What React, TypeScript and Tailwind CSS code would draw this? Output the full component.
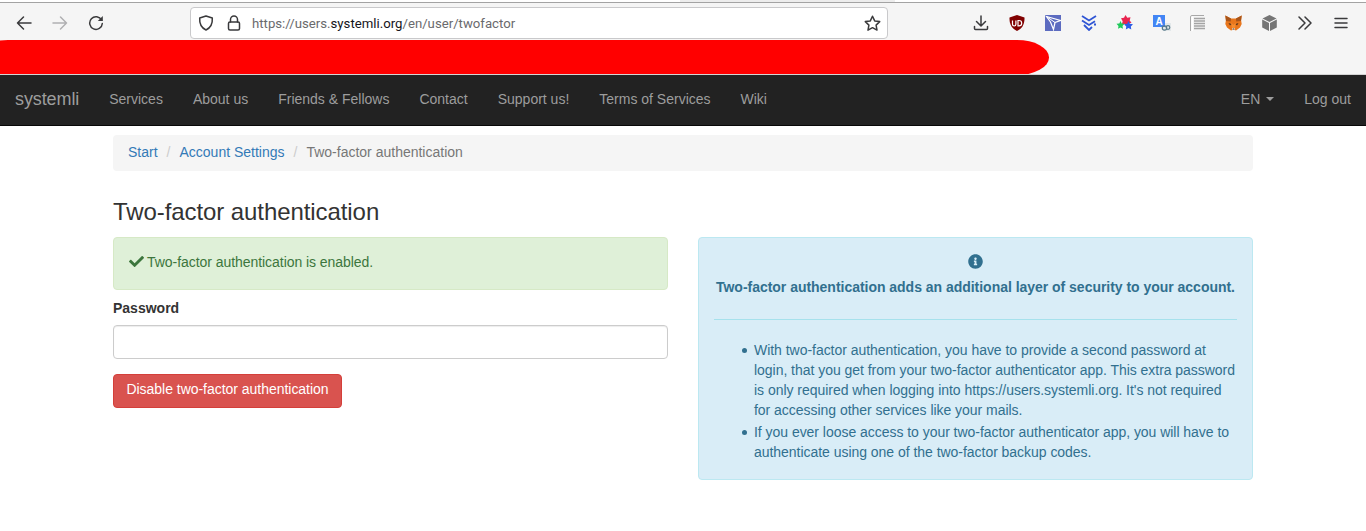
import React from "react";
import { FaCheck, FaInfoCircle } from "react-icons/fa";

const Btn = ({ children }: { children: React.ReactNode }) => (
  <div className="flex h-8 w-9 shrink-0 items-center justify-center">{children}</div>
);

const stroke = { fill: "none", stroke: "#3a3a3c", strokeWidth: 1.5, strokeLinecap: "round" as const, strokeLinejoin: "round" as const };

const Back = () => (
  <svg width="16" height="16" viewBox="0 0 16 16" {...stroke}><path d="M15 8H1.5M7.5 2 1.5 8l6 6" /></svg>
);
const Forward = () => (
  <svg width="16" height="16" viewBox="0 0 16 16" {...stroke} stroke="#b0b0b2"><path d="M1 8h13.5M8.5 2l6 6-6 6" /></svg>
);
const Reload = () => (
  <svg width="16" height="16" viewBox="0 0 16 16" {...stroke}>
    <path d="M13.6 5.2A6.3 6.3 0 1 0 14.3 8.5" />
    <path d="M14.8 1v5h-5z" fill="#3a3a3c" stroke="none" />
  </svg>
);
const Shield = () => (
  <svg width="16" height="16" viewBox="0 0 16 16" {...stroke}><path d="M8 1 14.3 3c.4 5.5-1.5 9.7-6.3 12C3.2 12.7 1.3 8.5 1.7 3z" /></svg>
);
const Lock = () => (
  <svg width="14" height="16" viewBox="0 0 14 16" {...stroke}>
    <path d="M3.5 7V4.500a3.500 3.500 0 0 1 7 0V7" />
    <rect x="1.5" y="7" width="11" height="8" rx="1.5" />
  </svg>
);
const Star = () => (
  <svg width="17" height="17" viewBox="0 0 17 17" {...stroke}>
    <path d="m8.5 1.3 2.200 4.600 5 .7-3.600 3.500.9 5-4.500-2.400L4 15.100l.9-5L1.300 6.600l5-.7z" />
  </svg>
);
const Download = () => (
  <svg width="16" height="16" viewBox="0 0 16 16" {...stroke}>
    <path d="M8 1v9.500M3.500 6.500 8 11l4.500-4.500M1.500 11.500v2a1 1 0 0 0 1 1h11a1 1 0 0 0 1-1v-2" />
  </svg>
);
const UBlock = () => (
  <svg width="16" height="16" viewBox="0 0 16 16">
    <path d="M8 0 15.500 2.500c.3 6.500-2.500 11-7.500 13.500C3 13.500.2 9 .5 2.500z" fill="#800000" />
    <path d="M3.500 5.500v3.800a1.700 1.700 0 0 0 3.400 0V5.500" fill="none" stroke="#fff" strokeWidth="1.200" />
    <path d="M9 5.500v5.400h1a2.700 2.700 0 0 0 0-5.400z" fill="none" stroke="#fff" strokeWidth="1.200" />
  </svg>
);
const Plane = () => (
  <svg width="16" height="16" viewBox="0 0 16 16">
    <rect width="16" height="16" fill="#5c6bc0" />
    <path d="M1.500 1.500 15.500 5.500 10 7.500 8.500 14.500 5.500 7z" fill="none" stroke="#fff" strokeWidth="1.200" />
    <path d="M1.500 1.500 10 7.500" stroke="#fff" strokeWidth="1" />
  </svg>
);
const Chevrons = () => (
  <svg width="16" height="16" viewBox="0 0 16 16" fill="none" stroke="#2f55d4" strokeWidth="1.800">
    <path d="M1 1 8 5.500 15 1M1 5.500 8 10l6-3.800M3 10l5 5 3-3" />
    <rect x="13" y="8.500" width="2" height="2" fill="#2f55d4" stroke="none" />
  </svg>
);
const Stars = () => (
  <svg width="18" height="17" viewBox="0 0 18 17">
    <path d="m9.500 0 1.800 2.800 3.200-.5-.8 3.200 1.800 2.300-3.200.6-1.200 3-2.200-2.500-3 .4.800-3.100L5 3.300l3-.6z" fill="#e8244f" />
    <path d="m4.500 6 1.200 2.400 2.800.4-2 2.100.5 2.900L4.500 12.500 2 13.800l.5-2.900-2-2.100 2.800-.4z" fill="#1fc95a" />
    <path d="m12.500 6 1.400 2.800 3.100.4-2.200 2.200.5 3.100-2.800-1.400-2.700 1.400.5-3.100-2.300-2.200 3.100-.4z" fill="#2b5ce6" />
  </svg>
);
const Translate = () => (
  <svg width="18" height="16" viewBox="0 0 18 16" className="ml-[1px]">
    <rect x="10" y="8" width="8" height="8" fill="#e3e8ea" />
    <rect width="12" height="12" fill="#4285f4" />
    <text x="6" y="10" textAnchor="middle" fontSize="10" fontWeight="700" fill="#fff" className="font-['Liberation_Sans']">A</text>
    <circle cx="11.500" cy="13" r="2.200" fill="none" stroke="#587a8a" strokeWidth="1.200" />
    <circle cx="15" cy="12.500" r="1.800" fill="none" stroke="#587a8a" strokeWidth="1.200" />
  </svg>
);
const Reader = () => (
  <svg width="15" height="16" viewBox="0 0 15 16">
    <path d="M.5 16V2Q.5 .5 2 .5H14" fill="none" stroke="#a8a8a8" strokeWidth="1" />
    <path d="M1.500 1.500h1.500V16H1.500z" fill="#fff" />
    <path d="M4 3.500h11M4 6h11M4 8.500h11M4 11h11M4 13.500h11" stroke="#a4a4a4" strokeWidth="1.400" />
  </svg>
);
const Fox = () => (
  <svg width="17" height="16" viewBox="0 0 17 16">
    <path d="M.3 .5 6 3.500h5L16.700 .5l-.6 5 .6 3.500-1.700 3.500-4 3-1.500-.5H7.500l-1.500.5-4-3L.3 9l.6-3.500z" fill="#e8761c" />
    <path d="M.3 .5 6 3.500 5.800 6.500 1 6zM16.700 .5 11 3.500 11.200 6.500 16 6z" fill="#a9551a" />
    <path d="M6 7.500 8.500 10 11 7.500 10 13H7z" fill="#f58c2f" />
    <path d="M3.500 8 6.500 9 5 10.500zM13.500 8l-3 1 1.500 1.500z" fill="#4a3320" />
    <path d="M7 13h3l-.5 2h-2z" fill="#f3e2cf" />
    <path d="M7.700 13.500h1.600v1h-1.600z" fill="#2f2f2f" />
  </svg>
);
const Cube = () => (
  <svg width="15" height="16" viewBox="0 0 15 16">
    <path d="M7.500 0 14.500 3.500 7.500 7 .5 3.500z" fill="#757575" />
    <path d="M.2 4.600 7 8v8L.2 12.400z" fill="#757575" />
    <path d="M14.800 4.600 8 8v8l6.800-3.600z" fill="#757575" />
  </svg>
);
const More = () => (
  <svg width="14" height="14" viewBox="0 0 14 14" {...stroke}><path d="m1 1 6 6-6 6M7 1l6 6-6 6" /></svg>
);
const Menu = () => (
  <svg width="14" height="14" viewBox="0 0 14 14" {...stroke}><path d="M1 2.500h12M1 7h12M1 11.500h12" /></svg>
);

const navItems = ["Services", "About us", "Friends & Fellows", "Contact", "Support us!", "Terms of Services", "Wiki"];

export default function App() {
  return (
    <div className="h-[531px] w-[1366px] overflow-hidden bg-white font-['Liberation_Sans',Arial,sans-serif] text-sm text-[#333]">
      <div className="h-[3px] border-b border-[#a3a3a3] bg-white">
        <div className="ml-[680px] h-[2px] w-[215px] bg-[#ededed]" />
      </div>
      <div className="flex h-[37px] items-center bg-[#f5f5f5] pl-[6px] pt-[3px]">
        <Btn><Back /></Btn>
        <Btn><Forward /></Btn>
        <Btn><Reload /></Btn>
        <div className="ml-[76px] flex h-[32px] w-[698px] items-center rounded-[4px] border border-[#c9c9cb] bg-white font-['Roboto',sans-serif] text-[13.2px] text-[#6a6a6d]">
          <div className="ml-[7px] flex w-[16px] justify-center"><Shield /></div>
          <div className="ml-[12px] flex w-[16px] justify-center"><Lock /></div>
          <div className="ml-[10px] flex-1 whitespace-nowrap pt-[3px]">
            https://users.<span className="text-[#15141a]">systemli.org</span>/en/user/twofactor
          </div>
          <div className="mr-[6px] flex"><Star /></div>
        </div>
        <div className="ml-[75px] flex">
          <Btn><Download /></Btn>
          <Btn><UBlock /></Btn>
          <Btn><Plane /></Btn>
          <Btn><Chevrons /></Btn>
          <Btn><Stars /></Btn>
          <Btn><Translate /></Btn>
          <Btn><Reader /></Btn>
          <Btn><Fox /></Btn>
          <Btn><Cube /></Btn>
          <Btn><More /></Btn>
          <Btn><Menu /></Btn>
        </div>
      </div>
      <div className="h-[35px] overflow-hidden border-b border-[#d4d4d4] bg-[#f5f5f5]">
        <div className="ml-[-24px] h-[35px] w-[1073px] rounded-[32px/17.5px] bg-[#ff0000]" />
      </div>
      <nav className="flex h-[51px] items-center border-b border-[#080808] bg-[#222] pb-[2px] text-[#9d9d9d]">
        <div className="ml-[15px] mr-[30px] text-lg tracking-[-0.1px]">systemli</div>
        <div className="flex gap-[30px]">
          {navItems.map((n) => (
            <span key={n}>{n}</span>
          ))}
        </div>
        <div className="ml-auto flex items-center">
          <span>EN</span>
          <span className="ml-[6px] h-0 w-0 border-x-4 border-t-4 border-x-transparent border-t-[#9d9d9d]" />
          <span className="ml-[30px] mr-[15px]">Log out</span>
        </div>
      </nav>
      <main className="mx-auto w-[1140px] pt-[9px]">
        <div className="flex h-[36px] items-center rounded-[4px] bg-[#f5f5f5] px-[15px] pb-[2px]">
          <span className="text-[#337ab7]">Start</span>
          <span className="px-[9px] text-[#ccc]">/</span>
          <span className="text-[#337ab7]">Account Settings</span>
          <span className="px-[9px] text-[#ccc]">/</span>
          <span className="text-[#777]">Two-factor authentication</span>
        </div>
        <h1 className="mt-[28px] text-[24px] leading-[26px] tracking-[-0.08px] text-[#333]">Two-factor authentication</h1>
        <div className="mt-[12px] flex justify-between">
          <div className="w-[555px]">
            <div className="flex h-[53px] items-center rounded-[4px] border border-[#d6e9c6] bg-[#dff0d8] px-[15px] pb-[4px] tracking-[-0.05px] text-[#3c763d]">
              <FaCheck className="mr-[3px] text-[15px]" />
              <span>Two-factor authentication is enabled.</span>
            </div>
            <label className="mt-[7px] block h-[28px] pt-[1px] font-bold leading-[20px] text-[#333]">Password</label>
            <input className="block h-[34px] w-full rounded-[4px] border border-[#ccc] bg-white shadow-[inset_0_1px_1px_rgba(0,0,0,0.075)]" />
            <button className="mt-[15px] h-[34px] w-[229px] rounded-[4px] border border-[#d43f3a] bg-[#d9534f] pb-[5px] tracking-[-0.03px] text-white">
              Disable two-factor authentication
            </button>
          </div>
          <div className="h-[243px] w-[555px] rounded-[4px] border border-[#bce8f1] bg-[#d9edf7] px-[15px] pt-[16px] text-[#31708f]">
            <div className="flex h-[16px] justify-center"><FaInfoCircle className="text-[15px]" /></div>
            <p className="mt-[7px] text-center font-bold leading-[20px] tracking-[-0.025px]">
              Two-factor authentication adds an additional layer of security to your account.
            </p>
            <hr className="mb-[20px] mt-[22px] border-[#a6e1ec]" />
            <ul className="pl-[40px] leading-[20px] tracking-[-0.035px]">
              <li className="relative mb-[2px] before:absolute before:left-[-12px] before:top-[8px] before:h-[5px] before:w-[5px] before:rounded-full before:bg-[#31708f]">
                With two-factor authentication, you have to provide a second password at login, that you get from your two-factor authenticator app. This extra password is only required when logging into https://users.systemli.org. It's not required for accessing other services like your mails.
              </li>
              <li className="relative before:absolute before:left-[-12px] before:top-[8px] before:h-[5px] before:w-[5px] before:rounded-full before:bg-[#31708f]">
                If you ever loose access to your two-factor authenticator app, you will have to authenticate using one of the two-factor backup codes.
              </li>
            </ul>
          </div>
        </div>
      </main>
    </div>
  );
}
